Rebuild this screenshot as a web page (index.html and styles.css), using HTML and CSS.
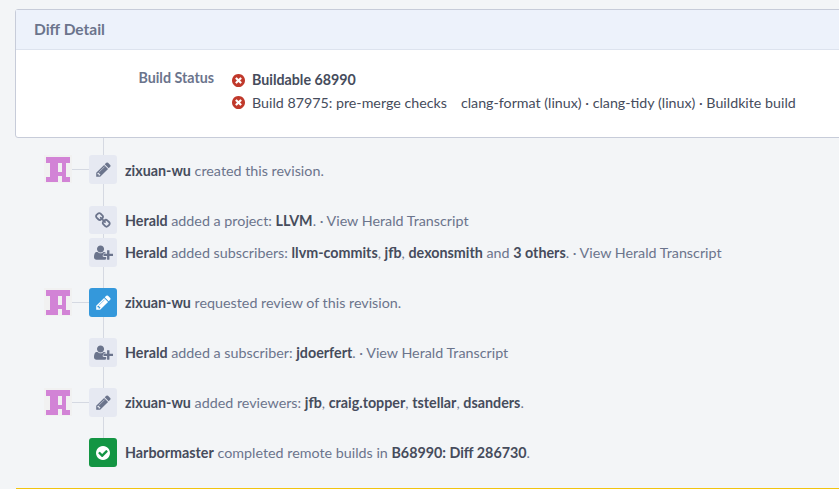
FILE: index.html
```html
<!DOCTYPE html>
<html lang="en">
<head>
    <meta charset="UTF-8">
    <title>Diff Detail</title>
    <link rel="stylesheet" href="styles.css">
</head>
<body>
    <svg class="defs" width="0" height="0">
        <symbol id="ident" viewBox="0 0 28 28">
            <rect width="28" height="28" fill="#f1f1f1"/>
            <path d="M2 2H26V8H22V22H26V27H2V22H6V8H2Z" fill="#d283d6"/>
            <rect x="14" y="8" width="4" height="9" fill="#f1f1f1"/>
            <rect x="14" y="21" width="4" height="6" fill="#f1f1f1"/>
        </symbol>
        <symbol id="pencil" viewBox="0 0 1792 1792">
            <path d="M491 1536l91-91-235-235-91 91v107h128v128h107zm523-928q0-22-22-22-10 0-17 7l-542 542q-7 7-7 17 0 22 22 22 10 0 17-7l542-542q7-7 7-17zm-54-192l416 416-832 832h-416v-416zm683 96q0 53-37 90l-166 166-416-416 166-165q36-38 90-38 53 0 91 38l235 234q37 39 37 91z"/>
        </symbol>
        <symbol id="link" viewBox="0 0 1792 1792">
            <path d="M1456 1216q0-40-28-68l-208-208q-28-28-68-28-42 0-72 32 3 3 19 18.500t21.500 21.500 15 19 13 25.500 3.500 27.500q0 40-28 68t-68 28q-15 0-27.500-3.500t-25.500-13-19-15-21.500-21.500-18.500-19q-33 31-33 73 0 40 28 68l206 207q27 27 68 27 40 0 68-26l147-146q28-28 28-67zm-703-705q0-40-28-68l-206-207q-28-28-68-28-39 0-68 27l-147 146q-28 28-28 67 0 40 28 68l208 208q27 27 68 27 42 0 72-31-3-3-19-18.500t-21.500-21.500-15-19-13-25.500-3.500-27.500q0-40 28-68t68-28q15 0 27.500 3.500t25.500 13 19 15 21.500 21.500 18.500 19q33-31 33-73zm895 705q0 120-85 203l-147 146q-83 83-203 83-121 0-204-85l-206-207q-83-83-83-203 0-123 88-209l-88-88q-86 88-208 88-120 0-204-84l-208-208q-84-84-84-204t85-203l147-146q83-83 203-83 121 0 204 85l206 207q83 83 83 203 0 123-88 209l88 88q86-88 208-88 120 0 204 84l208 208q84 84 84 204z"/>
        </symbol>
        <symbol id="adduser" viewBox="0 0 2048 1792">
            <path d="M704 896q-159 0-271.500-112.500t-112.500-271.500 112.500-271.500 271.500-112.500 271.500 112.500 112.500 271.500-112.500 271.500-271.500 112.500zm960 128h352q13 0 22.500 9.500t9.500 22.500v192q0 13-9.500 22.500t-22.500 9.500h-352v352q0 13-9.500 22.500t-22.500 9.500h-192q-13 0-22.500-9.500t-9.500-22.500v-352h-352q-13 0-22.500-9.500t-9.500-22.500v-192q0-13 9.500-22.500t22.500-9.500h352v-352q0-13 9.500-22.500t22.500-9.500h192q13 0 22.500 9.500t9.500 22.500zm-736 224q0 52 38 90t90 38h256v238q-68 50-171 50h-874q-121 0-194-69t-73-190q0-53 3.500-103.500t14-109 26.500-108.500 43-97.500 62-81 85.500-53.500 111.500-20q19 0 39 17 79 61 154.500 91.500t164.500 30.500 164.500-30.500 154.500-91.500q20-17 39-17 78 0 133 38t90 101h-174q-52 0-90 38t-38 90z"/>
        </symbol>
        <symbol id="timescircle" viewBox="128 128 1536 1536">
            <path d="M1277 1122q0-26-19-45l-181-181 181-181q19-19 19-45 0-27-19-46l-90-90q-19-19-46-19-26 0-45 19l-181 181-181-181q-19-19-45-19-27 0-46 19l-90 90q-19 19-19 46 0 26 19 45l181 181-181 181q-19 19-19 45 0 27 19 46l90 90q19 19 46 19 26 0 45-19l181-181 181 181q19 19 45 19 27 0 46-19l90-90q19-19 19-46zm387-226q0 209-103 385.500t-279.500 279.500-385.500 103-385.500-103-279.500-279.500-103-385.500 103-385.500 279.500-279.500 385.500-103 385.500 103 279.500 279.500 103 385.500z"/>
        </symbol>
        <symbol id="checkcircle" viewBox="128 128 1536 1536">
            <path d="M1412 734q0-28-18-46l-91-90q-19-19-45-19t-45 19l-408 407-226-226q-19-19-45-19t-45 19l-91 90q-18 18-18 46 0 27 18 45l362 362q19 19 45 19 27 0 46-19l543-543q18-18 18-45zm252 162q0 209-103 385.500t-279.500 279.500-385.500 103-385.500-103-279.500-279.500-103-385.500 103-385.500 279.500-279.500 385.500-103 385.500 103 279.500 279.500 103 385.500z"/>
        </symbol>
    </svg>

    <main>
        <section class="box">
            <div class="box-head">Diff Detail</div>
            <div class="box-body">
                <div class="prop-label">Build Status</div>
                <div class="prop-value">
                    <div class="build-row strong">
                        <svg class="fail"><use href="#timescircle"/></svg>
                        <span>Buildable 68990</span>
                    </div>
                    <div class="build-row">
                        <svg class="fail"><use href="#timescircle"/></svg>
                        <span class="build-name">Build 87975: pre-merge checks</span>
                        <span>clang-format (linux) · clang-tidy (linux) · Buildkite build</span>
                    </div>
                </div>
            </div>
        </section>

        <div class="timeline">
            <div class="event first">
                <svg class="avatar"><use href="#ident"/></svg>
                <div class="badge"><svg class="ico"><use href="#pencil"/></svg></div>
                <p><b>zixuan-wu</b> created this revision.</p>
            </div>
            <div class="event short">
                <div class="badge"><svg class="ico"><use href="#link"/></svg></div>
                <p><b>Herald</b> added a project: <b>LLVM</b>. · View Herald Transcript</p>
            </div>
            <div class="event tight">
                <div class="badge"><svg class="ico wide"><use href="#adduser"/></svg></div>
                <p><b>Herald</b> added subscribers: <b>llvm-commits</b>, <b>jfb</b>, <b>dexonsmith</b> and <b>3 others</b>. · View Herald Transcript</p>
            </div>
            <div class="event">
                <svg class="avatar"><use href="#ident"/></svg>
                <div class="badge blue"><svg class="ico"><use href="#pencil"/></svg></div>
                <p><b>zixuan-wu</b> requested review of this revision.</p>
            </div>
            <div class="event">
                <div class="badge"><svg class="ico wide"><use href="#adduser"/></svg></div>
                <p><b>Herald</b> added a subscriber: <b>jdoerfert</b>. · View Herald Transcript</p>
            </div>
            <div class="event">
                <svg class="avatar"><use href="#ident"/></svg>
                <div class="badge"><svg class="ico"><use href="#pencil"/></svg></div>
                <p><b>zixuan-wu</b> added reviewers: <b>jfb</b>, <b>craig.topper</b>, <b>tstellar</b>, <b>dsanders</b>.</p>
            </div>
            <div class="event">
                <div class="badge green"><svg class="check"><use href="#checkcircle"/></svg></div>
                <p><b>Harbormaster</b> completed remote builds in <b>B68990: Diff 286730</b>.</p>
            </div>
        </div>
        <div class="yellow-rule"></div>
    </main>
</body>
</html>
```

FILE: styles.css
```css
html, body {
    height: 100%;
}

body {
    margin: 0;
    overflow: hidden;
    background-color: #f3f5f7;
    color: #6b748c;
    font-family: Lato, sans-serif;
    font-size: 14.26px;
    line-height: 20px;
}

.defs {
    position: absolute;
}

main {
    padding: 9px 0 0 15px;
}

.box {
    margin-right: -4px;
    background-color: white;
    border: 1px solid #c7ccd9;
    border-radius: 3px;
}

.box-head {
    height: 39px;
    padding-left: 18px;
    background-color: #edf2fb;
    border-bottom: 1px solid #dde3ee;
    color: #6b748c;
    font-size: 15.5px;
    font-weight: 700;
    line-height: 39px;
}

.box-body {
    display: flex;
    box-sizing: border-box;
    height: 87px;
    padding-top: 18px;
}

.prop-label {
    width: 198px;
    color: #6b748c;
    font-weight: 700;
    text-align: right;
}

.prop-value {
    margin-left: 18px;
    color: #464c5c;
}

.build-row {
    display: flex;
    align-items: center;
    height: 23px;
    margin-top: -1px;
}

.build-row.strong {
    font-weight: 700;
    height: 24px;
    margin-top: 0;
}

.fail {
    flex: none;
    width: 13px;
    height: 13px;
    margin-right: 7px;
    fill: #c0392b;
}

.build-name {
    margin-right: 14px;
}

.timeline {
    margin-left: 29px;
    width: 800px;
    font-size: 14.31px;
    background: linear-gradient(#d5d9e2, #d5d9e2) 59px 0 / 1px 100% no-repeat;
}

.event {
    display: flex;
    align-items: center;
    position: relative;
    height: 29px;
    margin-top: 21px;
    padding-left: 45px;
}

.event.first {
    margin-top: 0;
    padding-top: 17px;
}

.event.short {
    height: 28px;
    margin-top: 22px;
}

.event.tight {
    margin-top: 4px;
}

.event p {
    margin: 1px 0 0 8px;
    color: #6b748c;
    white-space: nowrap;
}

.event.first p, .event.short p {
    margin-top: 2px;
}

.event b {
    color: #464c5c;
    font-weight: 700;
}

.avatar {
    position: absolute;
    left: 0;
    bottom: 1px;
    width: 28px;
    height: 28px;
}

.avatar + .badge::before {
    content: "";
    position: absolute;
    left: -17px;
    top: 14px;
    width: 17px;
    height: 1px;
    background-color: #d5d9e2;
}

.badge {
    position: relative;
    display: flex;
    align-items: center;
    justify-content: center;
    flex: none;
    width: 28px;
    height: 100%;
    border-radius: 3px;
    background-color: #e6e9f2;
    color: #6b748c;
}

.event.first .badge {
    height: 29px;
}

.badge.blue {
    background-color: #3498db;
    color: white;
}

.badge.green {
    background-color: #139543;
}

.ico {
    width: 17px;
    height: 17px;
    fill: currentColor;
}

.ico.wide {
    width: 19px;
    height: 17px;
}

.check {
    width: 14px;
    height: 14px;
    fill: white;
}

.yellow-rule {
    height: 2px;
    margin-top: 21px;
    margin-left: 1px;
    background-color: #f1c40f;
}
```
